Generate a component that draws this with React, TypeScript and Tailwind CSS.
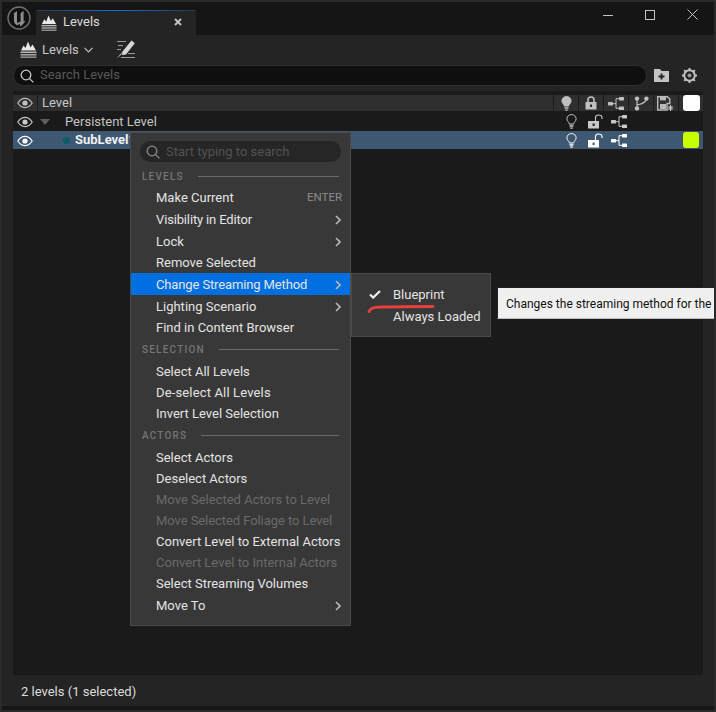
import React from "react";

const Eye = ({ c = "#c8c8c8" }: { c?: string }) => (
  <svg width="16" height="12" viewBox="0 0 16 12" fill="none">
    <path d="M0.8 6C3 2.7 5.3 1.4 8 1.4S13 2.7 15.2 6C13 9.3 10.7 10.6 8 10.6S3 9.3 0.8 6Z" stroke={c} strokeWidth="1.2" />
    <circle cx="8" cy="6" r="2.6" fill={c} />
  </svg>
);

const LevelsIcon = ({ s = 17, className = "" }: { s?: number; className?: string }) => (
  <svg className={className} width={s} height={s} viewBox="0 0 17 17">
    <path d="M1 9.5L3.5 4.5L5.5 7L8 0.5L10.5 6.5L12.5 3.5L16 9.5Z" fill="#e8e8e8" />
    <rect x="0.5" y="10.5" width="16" height="1.6" fill="#b5b5b5" />
    <rect x="0.5" y="13" width="16" height="1.6" fill="#a0a0a0" />
    <rect x="0.5" y="15.4" width="16" height="1.6" fill="#8a8a8a" />
  </svg>
);

const Search = ({ c = "#c8c8c8", s = 14 }: { c?: string; s?: number }) => (
  <svg width={s} height={s} viewBox="0 0 14 14" fill="none" stroke={c} strokeWidth="1.3">
    <circle cx="6" cy="6" r="4.8" />
    <path d="M9.6 9.6L13.4 13.4" />
  </svg>
);

const Bulb = ({ c, filled = false }: { c: string; filled?: boolean }) => (
  <svg width="11" height="15" viewBox="0 0 11 16" fill={filled ? c : "none"} stroke={c} strokeWidth="1">
    <path d="M5.5 0.6C2.6 0.6 0.6 2.6 0.6 5.2C0.6 7.6 2.6 8.4 3.3 10.6H7.7C8.4 8.4 10.4 7.6 10.4 5.2C10.4 2.6 8.4 0.6 5.5 0.6Z" />
    <path d="M3.2 12H7.8M3.6 13.6H7.4M4.2 15.2H6.8" strokeWidth="1.1" stroke={c} />
  </svg>
);

const Lock = ({ c }: { c: string }) => (
  <svg width="12" height="14" viewBox="0 0 12 14">
    <path d="M3 6V3.8C3 2 4.2 1 6 1S9 2 9 3.8V6" fill="none" stroke={c} strokeWidth="1.6" />
    <path d="M0.5 6H11.5V13.5H0.5Z" fill={c} />
    <rect x="5" y="8.5" width="2" height="2.5" fill="#2c2c2c" />
  </svg>
);

const Unlock = ({ c, k }: { c: string; k: string }) => (
  <svg width="15" height="15" viewBox="0 0 15 15">
    <path d="M7.5 7V3.6C7.5 2 8.7 1 10.5 1S14 2 14 3.6V5" fill="none" stroke={c} strokeWidth="1.1" />
    <path d="M0 7H11V14.5H0Z" fill={c} />
    <rect x="4.6" y="9.5" width="2" height="2.5" fill={k} />
  </svg>
);

const Hierarchy = ({ c }: { c: string }) => (
  <svg width="16" height="13" viewBox="0 0 16 13">
    <rect x="0" y="5" width="5" height="3.4" rx="0.6" fill={c} />
    <rect x="11" y="0" width="5" height="3.4" rx="0.6" fill={c} />
    <rect x="11" y="9.6" width="5" height="3.4" rx="0.6" fill={c} />
    <path d="M5 6.7H8M11 1.7H8V11.3H11" fill="none" stroke={c} strokeWidth="1" />
  </svg>
);

const Branch = () => (
  <svg width="15" height="15" viewBox="0 0 15 15" fill="#c0c0c0">
    <circle cx="3" cy="2.6" r="2.2" />
    <circle cx="12.4" cy="2.6" r="2.2" />
    <circle cx="3" cy="12.4" r="2.2" />
    <path d="M3 3V12M3 9C6 8 11 8 12.4 3" fill="none" stroke="#c0c0c0" strokeWidth="1.2" />
  </svg>
);

const Save = () => (
  <svg width="18" height="15" viewBox="0 0 18 15">
    <path d="M0.7 0.7H10.5L12.8 3V7.5H10V14H0.7Z" fill="none" stroke="#b8b8b8" strokeWidth="1.4" />
    <rect x="3" y="1" width="6" height="3.4" fill="#b8b8b8" />
    <rect x="3" y="8" width="6" height="5" fill="#b8b8b8" />
    <path d="M13.5 9V15M10.8 12H16.2M11.6 10L15.4 14M15.4 10L11.6 14" stroke="#c8c8c8" strokeWidth="1" />
  </svg>
);

const Chevron = () => (
  <svg width="6" height="10" viewBox="0 0 6 10" fill="none" stroke="#b8b8b8" strokeWidth="1.6">
    <path d="M1 1L5 5L1 9" />
  </svg>
);

type Item = { t: string; tall?: boolean; sub?: boolean; off?: boolean; on?: boolean; tr?: string; shortcut?: string };

const Row = ({ t, tall, sub, off, on, tr = "", shortcut }: Item) => (
  <div className={`flex items-center justify-between pl-[25px] pr-[9px] ${tall ? "h-[22px] pt-px" : "h-[21px]"} ${on ? "bg-[#0070e0]" : ""}`}>
    <span className={`${off ? "text-[#6a6a6a]" : "text-[#e4e4e4]"} ${tr}`}>{t}</span>
    {sub && <Chevron />}
    {shortcut && <span className="-mr-px text-[11.5px] text-[#8c8c8c]">{shortcut}</span>}
  </div>
);

const Heading = ({ t, w }: { t: string; w: string }) => (
  <div className="flex h-[22px] items-center gap-[14px] pl-[11px] pr-[11px]">
    <span className="text-[10px] font-medium tracking-[1.2px] text-[#757575]">{t}</span>
    <div className={`h-px bg-[#6a6a6a] ${w}`} />
  </div>
);

const HeaderCell = ({ children, w = "w-[24px]" }: { children: React.ReactNode; w?: string }) => (
  <div className={`flex h-full ${w} items-center justify-center bg-[#2f2f2f]`}>{children}</div>
);

const RowIcons = ({ c, k, swatch }: { c: string; k: string; swatch?: boolean }) => (
  <div className="ml-auto flex items-center">
    <div className="flex w-[24px] justify-center"><Bulb c={c} /></div>
    <div className="flex w-[24px] justify-center"><Unlock c={c} k={k} /></div>
    <div className="flex w-[24px] justify-center"><Hierarchy c={c} /></div>
    <div className="flex w-[72px] justify-end pr-[4px]">
      {swatch && <div className="h-[16px] w-[16px] rounded-[3px] bg-[#c8ff00]" />}
    </div>
  </div>
);

export default function App() {
  return (
    <div className="relative flex h-[712px] w-[716px] flex-col overflow-hidden border-2 border-[#2a2a2a] bg-[#151515] text-[13px] font-['Roboto',sans-serif] text-[#d0d0d0]">
      {/* Title bar */}
      <div className="flex h-[33px] shrink-0 items-end pl-[5px]">
        <svg className="mb-[5px]" width="24" height="24" viewBox="0 0 24 24" fill="none">
          <circle cx="12" cy="12" r="11" fill="#111111" stroke="#707070" strokeWidth="1.4" />
          <path d="M6.5 7.5L10 5V15.5C10 16.6 11 17 11.6 16.6L13.6 15.4V7.2L16.6 4.8V15.6L18.4 14.4C17.4 17 15.4 19.2 13 20.4L13 17.8L10.6 19.2C8.6 18.8 7 17 7 15V8.4Z" fill="#8c8c8c" />
        </svg>
        <div className="ml-[5px] flex h-[25px] w-[160px] flex-col rounded-t-[4px] bg-[#242424]">
          <div className="h-px w-full shrink-0 rounded-t-[4px] bg-gradient-to-r from-[#243a52] via-[#0a70e0] to-[#243a52]" />
          <div className="flex flex-1 items-center pb-[3px] pl-[5px] pr-[14px]">
            <LevelsIcon s={16} className="mt-[3px]" />
            <span className="ml-[6px] text-[13px] text-[#dcdcdc]">Levels</span>
            <span className="ml-auto text-[#c8c8c8]">
              <svg width="8" height="8" viewBox="0 0 8 8" stroke="currentColor" strokeWidth="1.8"><path d="M1 1L7 7M7 1L1 7" /></svg>
            </span>
          </div>
        </div>
        <div className="ml-auto flex items-center gap-[32px] self-start pr-[16px] pt-[7px]">
          <svg width="10" height="10" viewBox="0 0 10 10" stroke="#c4c4c4"><path d="M0 5.5H10" /></svg>
          <svg width="10" height="10" viewBox="0 0 10 10" fill="none" stroke="#c4c4c4"><rect x="0.5" y="0.5" width="9" height="9" /></svg>
          <svg width="11" height="11" viewBox="0 0 11 11" stroke="#c4c4c4"><path d="M0.5 0.5L10.5 10.5M10.5 0.5L0.5 10.5" /></svg>
        </div>
      </div>

      {/* Panel */}
      <div className="flex min-h-0 flex-1 flex-col bg-[#242424] px-[11px]">
        <div className="flex h-[28px] shrink-0 items-center pl-[7px] pt-[1px]">
          <LevelsIcon s={17} />
          <span className="ml-[5px] text-[#c8c8c8]">Levels</span>
          <svg className="ml-[5px]" width="9" height="6" viewBox="0 0 9 6" fill="none" stroke="#c0c0c0" strokeWidth="1.2"><path d="M0.5 0.8L4.5 4.8L8.5 0.8" /></svg>
          <svg className="ml-[23px]" width="19" height="19" viewBox="0 0 19 19">
            <path d="M1 1.5H10M2 5.5H7M1 9.5H5M5 17.5H19M12 13.5H19" stroke="#a8a8a8" strokeWidth="0.9" />
            <path d="M15.5 0.5L18.8 3.2L10 14.5L5.8 15L6.5 11.5Z" fill="#d8d8d8" />
            <path d="M0.5 18.5L5 15L6 12Z" fill="#b0b0b0" />
          </svg>
        </div>
        <div className="flex h-[28px] shrink-0 items-center pb-[5px] pt-[2px]">
          <div className="flex h-[21px] w-[634px] items-center rounded-full border border-[#2e2e2e] bg-[#0f0f0f] pl-[6px]">
            <Search />
            <span className="ml-[6px] -translate-y-px text-[#585858]">Search Levels</span>
          </div>
          <svg className="ml-[7px]" width="15" height="13" viewBox="0 0 15 13">
            <path d="M0 0H6L7.5 2H15V13H0Z" fill="#c4c4c4" />
            <path d="M7.5 4.5V10.5M4.5 7.5H10.5" stroke="#242424" strokeWidth="1.8" />
          </svg>
          <svg className="ml-[13px]" width="15" height="15" viewBox="0 0 16 16" fill="none">
            <circle cx="8" cy="8" r="5.6" stroke="#c4c4c4" strokeWidth="2" />
            <circle cx="8" cy="8" r="2.2" fill="#9a9a9a" />
            <path d="M8 0V3M8 13V16M0 8H3M13 8H16M2.3 2.3L4.3 4.3M11.7 11.7L13.7 13.7M13.7 2.3L11.7 4.3M4.3 11.7L2.3 13.7" stroke="#c4c4c4" strokeWidth="2" />
          </svg>
        </div>

        {/* List */}
        <div className="flex min-h-0 flex-1 flex-col bg-[#1a1a1a] pt-[4px]">
          <div className="flex h-[16px] shrink-0 gap-px">
            <HeaderCell><Eye c="#c0c0c0" /></HeaderCell>
            <div className="flex h-full flex-1 items-center bg-[#2f2f2f] pl-[4px] text-[#c8c8c8]">Level</div>
            <HeaderCell><Bulb c="#c0c0c0" filled /></HeaderCell>
            <HeaderCell><Lock c="#c0c0c0" /></HeaderCell>
            <HeaderCell><Hierarchy c="#c0c0c0" /></HeaderCell>
            <HeaderCell><Branch /></HeaderCell>
            <HeaderCell><Save /></HeaderCell>
            <HeaderCell><div className="h-[16px] w-[17px] rounded-[3px] bg-white" /></HeaderCell>
          </div>
          <div className="flex h-[20px] shrink-0 items-center pt-px">
            <div className="flex w-[24px] justify-center"><Eye /></div>
            <svg className="ml-[3px]" width="10" height="6" viewBox="0 0 10 6"><path d="M0 0H10L5 6Z" fill="#5f5f5f" /></svg>
            <span className="ml-[15px] text-[#c4c4c4]">Persistent Level</span>
            <RowIcons c="#c8c8c8" k="#1a1a1a" />
          </div>
          <div className="flex h-[18px] shrink-0 items-center bg-[#3f5872]">
            <div className="flex w-[24px] translate-y-px justify-center"><Eye c="#ffffff" /></div>
            <div className="ml-[26px] h-[7px] w-[7px] shrink-0 rounded-full bg-[#0a6060]" />
            <span className="ml-[5px] font-bold text-[#f0f0f0]">SubLevel1</span>
            <RowIcons c="#ffffff" k="#3f5872" swatch />
          </div>
        </div>

        <div className="flex h-[31px] shrink-0 items-center pl-[8px] pt-[2px] text-[#dcdcdc]">2 levels (1 selected)</div>
      </div>
      <div className="h-[4px] shrink-0" />

      {/* Context menu */}
      <div className="absolute left-[128px] top-[130px] w-[221px] border border-[#4a4a4a] bg-[#383838] pb-[9px] pt-[8px] text-[13px]">
        <div className="mx-[9px] flex h-[21px] items-center rounded-full bg-[#262626] pl-[6px]">
          <Search c="#8a8a8a" />
          <span className="ml-[6px] text-[#525252]">Start typing to search</span>
        </div>
        <div className="mt-[3px]"><Heading t="LEVELS" w="w-[146px]" /></div>
        <Row t="Make Current" shortcut="ENTER" />
        <Row t="Visibility in Editor" tall sub tr="tracking-[-0.15px]" />
        <Row t="Lock" tall sub />
        <Row t="Remove Selected" />
        <Row t="Change Streaming Method" tall sub on tr="tracking-[-0.13px]" />
        <Row t="Lighting Scenario" tall sub />
        <Row t="Find in Content Browser" />
        <Heading t="SELECTION" w="w-[126px]" />
        <Row t="Select All Levels" tall />
        <Row t="De-select All Levels" tr="tracking-[0.15px]" />
        <Row t="Invert Level Selection" />
        <Heading t="ACTORS" w="w-[147px]" />
        <Row t="Select Actors" tall />
        <Row t="Deselect Actors" />
        <Row t="Move Selected Actors to Level" off />
        <Row t="Move Selected Foliage to Level" off tr="tracking-[-0.07px]" />
        <Row t="Convert Level to External Actors" />
        <Row t="Convert Level to Internal Actors" off />
        <Row t="Select Streaming Volumes" />
        <Row t="Move To" tall sub />
      </div>

      {/* Submenu */}
      <div className="absolute left-[349px] top-[271px] w-[140px] border border-[#4a4a4a] bg-[#383838] py-[9px] text-[13px] text-[#e4e4e4]">
        <div className="flex h-[22px] items-center pl-[17px] pt-px">
          <svg width="12" height="9" viewBox="0 0 12 9" fill="none" stroke="#eeeeee" strokeWidth="2.2"><path d="M1 4.5L4.2 7.6L11 1" /></svg>
          <span className="ml-[12px]">Blueprint</span>
        </div>
        <div className="flex h-[22px] items-center pl-[41px] pt-px">Always Loaded</div>
      </div>

      {/* Tooltip */}
      <div className="absolute left-[495px] top-[285px] flex h-[32px] w-[240px] items-center border border-[#222222] border-b-[#bdbdbd] bg-[#f0f0f0] pl-[8px] pt-px text-[12px] whitespace-nowrap text-[#111111]">
        Changes the streaming method for the
      </div>

      {/* Annotation */}
      <svg className="absolute left-[360px] top-[298px]" width="80" height="16" viewBox="0 0 80 16" fill="none">
        <path d="M7 11.5C9 7 13 7.5 20 7C35 6.5 55 6.5 71 6.5" stroke="#e8403c" strokeWidth="2.8" strokeLinecap="round" />
      </svg>
    </div>
  );
}
